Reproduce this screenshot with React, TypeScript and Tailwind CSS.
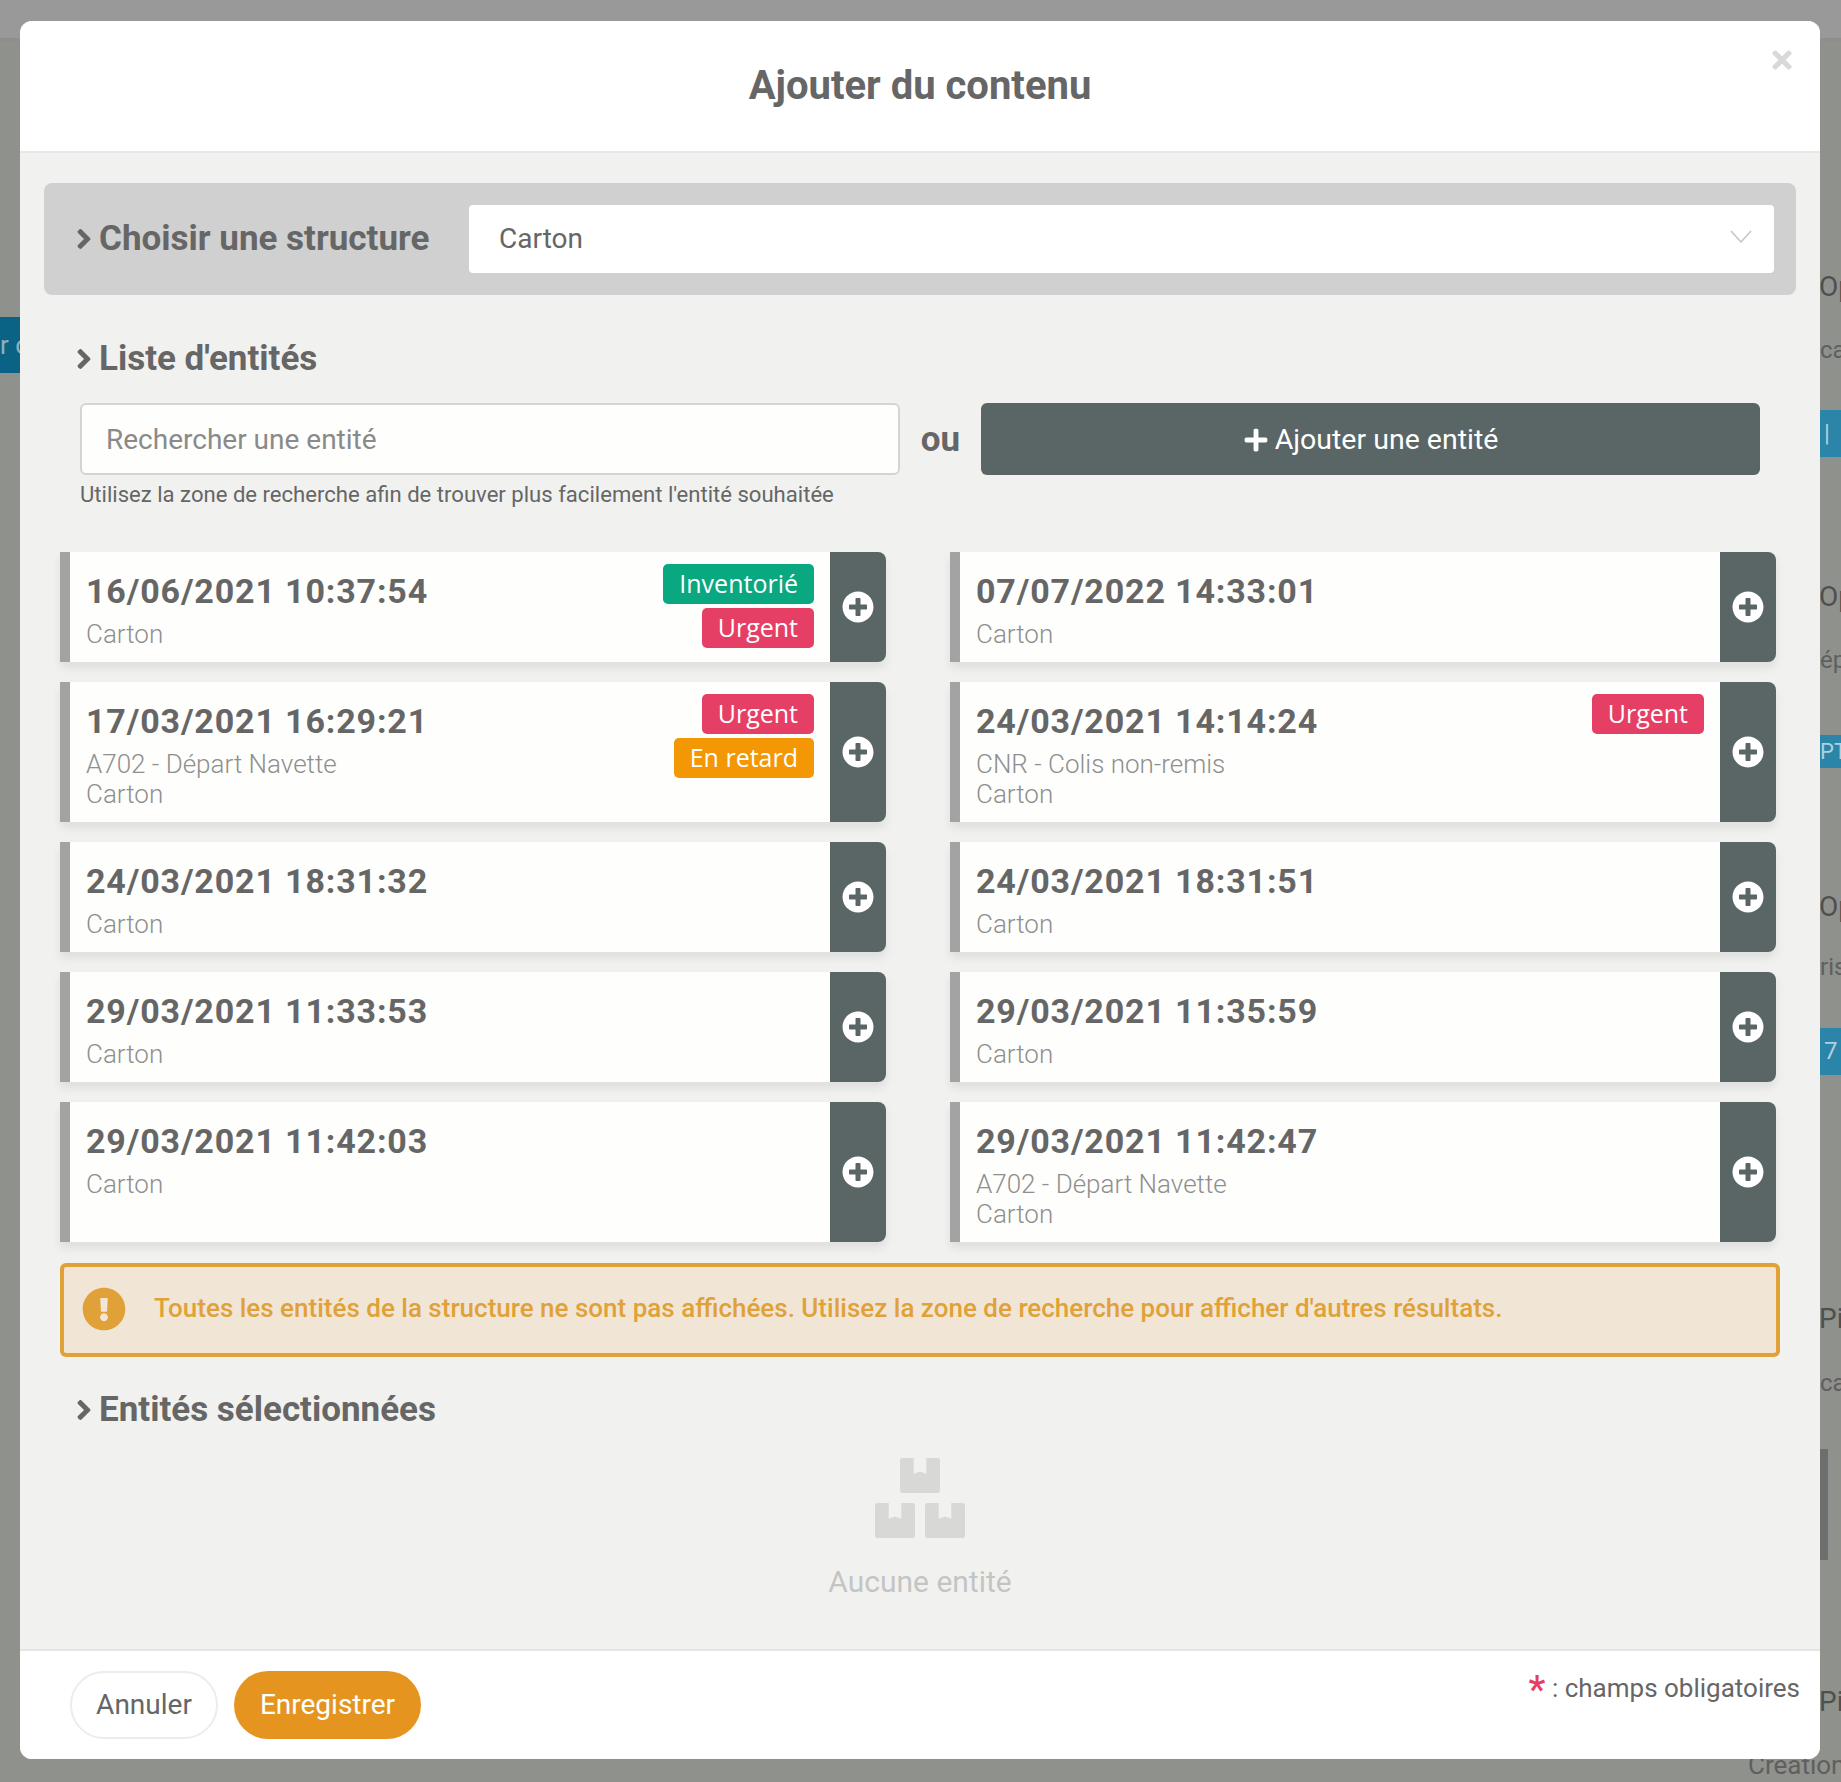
import { FaAngleRight, FaExclamationCircle, FaPlus, FaPlusCircle, FaTimes } from 'react-icons/fa'

type Tag = 'Inventorié' | 'Urgent' | 'En retard'

interface Entity {
  date: string
  site?: string
  tall?: boolean
  tags?: Tag[]
}

const entities: Entity[] = [
  { date: '16/06/2021 10:37:54', tags: ['Inventorié', 'Urgent'] },
  { date: '07/07/2022 14:33:01' },
  { date: '17/03/2021 16:29:21', site: 'A702 - Départ Navette', tall: true, tags: ['Urgent', 'En retard'] },
  { date: '24/03/2021 14:14:24', site: 'CNR - Colis non-remis', tall: true, tags: ['Urgent'] },
  { date: '24/03/2021 18:31:32' },
  { date: '24/03/2021 18:31:51' },
  { date: '29/03/2021 11:33:53' },
  { date: '29/03/2021 11:35:59' },
  { date: '29/03/2021 11:42:03', tall: true },
  { date: '29/03/2021 11:42:47', site: 'A702 - Départ Navette', tall: true },
]

const tagColors: Record<Tag, string> = {
  Inventorié: 'bg-[#0aa881]',
  Urgent: 'bg-[#e53f66]',
  'En retard': 'bg-[#f49704]',
}

function SectionTitle({ children }: { children: string }) {
  return (
    <h2 className="flex items-center text-[35px] leading-[40px] font-bold text-[#666] whitespace-nowrap">
      <FaAngleRight className="w-[20px] h-[32px] mr-[5px] text-[#666]" />
      {children}
    </h2>
  )
}

function EntityCard({ entity }: { entity: Entity }) {
  return (
    <div className={`flex rounded-r-lg shadow-[0_6px_10px_rgba(0,0,0,0.08)] ${entity.tall ? 'h-[140px]' : 'h-[110px]'}`}>
      <div className="relative flex-1 bg-[#fefefc] border-l-[10px] border-[#a3a3a3] pl-[16px] pt-[19px]">
        <p className="text-[34px] leading-[40px] font-bold tracking-[0.85px] text-[#666]">{entity.date}</p>
        <div className="mt-[8px] text-[26px] leading-[30px] font-light text-[#8f8f8f]">
          {entity.site && <p>{entity.site}</p>}
          <p>Carton</p>
        </div>
        {entity.tags && (
          <div className="absolute top-[12px] right-[16px] flex flex-col items-end gap-[4px]">
            {entity.tags.map(tag => (
              <span
                key={tag}
                className={`h-[40px] px-[16px] rounded-[5px] text-white text-[25px] leading-[38px] font-['Open_Sans',sans-serif] ${tagColors[tag]}`}
              >
                {tag}
              </span>
            ))}
          </div>
        )}
      </div>
      <div className="w-[56px] shrink-0 flex items-center justify-center bg-[#5a6565] rounded-r-lg">
        <FaPlusCircle className="w-[32px] h-[32px] text-white" />
      </div>
    </div>
  )
}

function BoxesIcon() {
  const box = 'M0 2a2 2 0 0 1 2-2h9v14l5-2 5 2V0h9a2 2 0 0 1 2 2v27a2 2 0 0 1-2 2H2a2 2 0 0 1-2-2z'
  return (
    <svg width="90" height="80" viewBox="0 0 90 80" className="text-[#d8d9d7]" fill="currentColor">
      <path d={box} transform="translate(25 0) scale(1.25 1.13)" />
      <path d={box} transform="translate(0 45) scale(1.25 1.13)" />
      <path d={box} transform="translate(50 45) scale(1.25 1.13)" />
    </svg>
  )
}

// Blurred page left behind the overlay
function Backdrop() {
  return (
    <div className="absolute inset-0 text-[#4f4f4f] font-['Roboto',sans-serif]">
      <div className="absolute left-0 right-0 top-0 h-[38px] bg-[#999]" />
      <div className="absolute left-0 right-0 top-[38px] h-[4px] bg-[#8e8e8e]" />
      <div className="absolute left-0 top-[317px] w-[20px] h-[56px] bg-[#0a6285] text-[#8fb0c0] text-[26px] leading-[56px] whitespace-nowrap overflow-hidden">r c</div>
      <div className="absolute left-[1820px] top-[410px] w-[21px] h-[47px] bg-[#2a85a8] text-[#b0d0dc] text-[24px] leading-[47px] pl-[4px] overflow-hidden">|</div>
      <div className="absolute left-[1820px] top-[735px] w-[21px] h-[33px] bg-[#2a85a8] text-[#b0d0dc] text-[22px] leading-[33px] overflow-hidden">PT</div>
      <div className="absolute left-[1820px] top-[1028px] w-[21px] h-[47px] bg-[#2a85a8] text-[#b0d0dc] text-[24px] leading-[47px] pl-[4px] overflow-hidden">7</div>
      <div className="absolute left-[1820px] top-[1449px] w-[8px] h-[111px] bg-[#6e6e6e]" />
      <span className="absolute left-[1819px] top-[272px] text-[28px] leading-[30px]">Op</span>
      <span className="absolute left-[1820px] top-[335px] text-[24px] leading-[30px] text-[#5f5f5f]">ca</span>
      <span className="absolute left-[1819px] top-[582px] text-[28px] leading-[30px]">Op</span>
      <span className="absolute left-[1820px] top-[645px] text-[24px] leading-[30px] text-[#5f5f5f]">ép</span>
      <span className="absolute left-[1819px] top-[892px] text-[28px] leading-[30px]">Op</span>
      <span className="absolute left-[1820px] top-[952px] text-[24px] leading-[30px] text-[#5f5f5f]">ris</span>
      <span className="absolute left-[1819px] top-[1304px] text-[28px] leading-[30px]">Pi</span>
      <span className="absolute left-[1820px] top-[1368px] text-[24px] leading-[30px] text-[#5f5f5f]">ca</span>
      <span className="absolute left-[1819px] top-[1687px] text-[28px] leading-[30px]">Pi</span>
      <span className="absolute left-[1748px] top-[1750px] text-[26px] leading-[30px] text-[#5f5f5f]">Creation</span>
    </div>
  )
}

export default function App() {
  return (
    <div className="relative h-[1782px] overflow-hidden bg-[#8f918c] font-['Roboto',sans-serif] pl-[20px] pt-[21px]">
      <Backdrop />
      <div className="relative w-[1800px] h-[1738px] flex flex-col rounded-xl overflow-hidden bg-[#f1f2f0]">
        {/* Header */}
        <div className="relative h-[132px] shrink-0 bg-white border-b-2 border-[#e8e8e8] flex items-center justify-center">
          <h1 className="text-[40px] leading-[50px] font-bold text-[#666]">Ajouter du contenu</h1>
          <FaTimes className="absolute top-[25px] right-[26px] w-[24px] h-[28px] text-[#d9d9d9]" />
        </div>

        <div className="flex-1 pt-[30px] px-[24px]">
          {/* Structure */}
          <div className="h-[112px] rounded-lg bg-[#d0d0d0] flex items-center pl-[30px] pr-[22px]">
            <div className="w-[395px] shrink-0"><SectionTitle>Choisir une structure</SectionTitle></div>
            <div className="flex-1 h-[68px] bg-white rounded-[4px] flex items-center justify-between pl-[30px] pr-[22px] text-[28px] text-[#666]">
              Carton
              <svg width="22" height="13" viewBox="0 0 22 13" fill="none" stroke="#c4c4c4" strokeWidth="1.5" className="-mt-[6px]">
                <path d="M1 1l10 11L21 1" />
              </svg>
            </div>
          </div>

          {/* Search */}
          <div className="mt-[44px] pl-[30px]"><SectionTitle>Liste d'entités</SectionTitle></div>
          <div className="mt-[24px] ml-[36px] mr-[36px] flex items-center">
            <div className="w-[820px] h-[72px] rounded-md border-2 border-[#d4d4d2] bg-[#fefefc] flex items-center pl-[24px] pt-[2px] text-[28px] text-[#8a8a8a]">
              Rechercher une entité
            </div>
            <span className="w-[81px] pt-[2px] text-center text-[35px] font-bold text-[#666]">ou</span>
            <button className="flex-1 h-[72px] pt-[2px] rounded-md bg-[#5a6565] text-white text-[28.5px] flex items-center justify-center gap-[6px]">
              <FaPlus className="w-[26px] h-[26px]" />
              Ajouter une entité
            </button>
          </div>
          <p className="mt-[4px] ml-[36px] text-[22.1px] leading-[30px] text-[#666]">
            Utilisez la zone de recherche afin de trouver plus facilement l'entité souhaitée
          </p>

          {/* Entities */}
          <div className="mt-[43px] ml-[16px] grid grid-cols-[826px_826px] gap-x-[64px] gap-y-[20px]">
            {entities.map(entity => (
              <EntityCard key={entity.date} entity={entity} />
            ))}
          </div>

          {/* Warning */}
          <div className="mt-[21px] ml-[16px] w-[1720px] h-[94px] rounded-md border-4 border-[#e0a138] bg-[#f1e6d6] flex items-center pl-[18px] pb-[2px] text-[#e0a138]">
            <FaExclamationCircle className="w-[44px] h-[44px] shrink-0" />
            <span className="ml-[28px] pb-[1px] text-[26px] font-medium">
              Toutes les entités de la structure ne sont pas affichées. Utilisez la zone de recherche pour afficher d'autres résultats.
            </span>
          </div>

          {/* Selected */}
          <div className="mt-[33px] pl-[30px]"><SectionTitle>Entités sélectionnées</SectionTitle></div>
          <div className="mt-[28px] flex flex-col items-center">
            <BoxesIcon />
            <p className="mt-[26px] text-[30px] leading-[36px] text-[#c4c5c3]">Aucune entité</p>
          </div>
        </div>

        {/* Footer */}
        <div className="h-[110px] shrink-0 bg-white border-t-2 border-[#e4e4e4] flex justify-between pl-[50px] pr-[20px] pt-[20px]">
          <div className="flex gap-[16px]">
            <button className="w-[148px] h-[68px] rounded-full border-2 border-[#ececec] text-[28px] text-[#666]">Annuler</button>
            <button className="w-[187px] h-[68px] rounded-full bg-[#e5951f] text-[28px] text-white">Enregistrer</button>
          </div>
          <p className="-mt-[1px] text-[26px] leading-[36px] text-[#666] whitespace-nowrap">
            <span className="text-[#e53f66] text-[38px] leading-[36px] align-middle font-medium">*</span> : champs obligatoires
          </p>
        </div>
      </div>
    </div>
  )
}
